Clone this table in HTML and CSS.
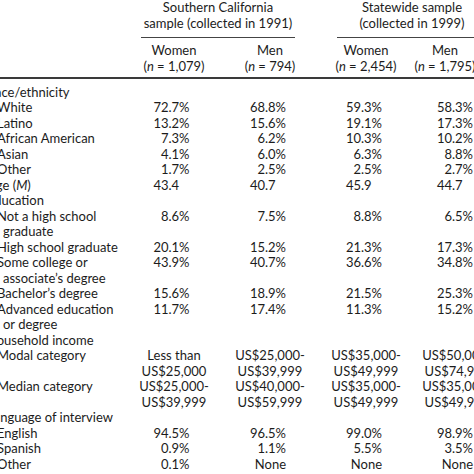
FILE: index.html
```html
<!DOCTYPE html>
<html>
<head>
<meta charset="utf-8">
<link rel="stylesheet" href="styles.css">
</head>
<body>
<div class="page">
  <div class="table">
    <div></div>
    <div class="group g1">Southern California<br>sample (collected in 1991)</div>
    <div class="group g2">Statewide sample<br>(collected in 1999)</div>

    <div class="hcell"></div>
    <div class="hcell hdr">Women<br>(<i>n</i> = 1,079)</div>
    <div class="hcell hdr">Men<br>(<i>n</i> = 794)</div>
    <div class="hcell hdr">Women<br>(<i>n</i> = 2,454)</div>
    <div class="hcell hdr h4">Men<br>(<i>n</i> = 1,795)</div>

    <div class="rule"></div>

    <div class="top">Race/ethnicity</div><div></div><div></div><div></div><div></div>
    <div class="sub">White</div><div class="num c1">72.7%</div><div class="num c2">68.8%</div><div class="num c3">59.3%</div><div class="num c4">58.3%</div>
    <div class="sub">Latino</div><div class="num c1">13.2%</div><div class="num c2">15.6%</div><div class="num c3">19.1%</div><div class="num c4">17.3%</div>
    <div class="sub">African American</div><div class="num c1">7.3%</div><div class="num c2">6.2%</div><div class="num c3">10.3%</div><div class="num c4">10.2%</div>
    <div class="sub">Asian</div><div class="num c1">4.1%</div><div class="num c2">6.0%</div><div class="num c3">6.3%</div><div class="num c4">8.8%</div>
    <div class="sub">Other</div><div class="num c1">1.7%</div><div class="num c2">2.5%</div><div class="num c3">2.5%</div><div class="num c4">2.7%</div>
    <div class="top">Age (<i>M</i>)</div><div class="num c1">43.4<span class="ph">%</span></div><div class="num c2">40.7<span class="ph">%</span></div><div class="num c3">45.9<span class="ph">%</span></div><div class="num c4">44.7<span class="ph">%</span></div>
    <div class="top">Education</div><div></div><div></div><div></div><div></div>
    <div class="sub">Not a high school<br>graduate</div><div class="num c1">8.6%</div><div class="num c2">7.5%</div><div class="num c3">8.8%</div><div class="num c4">6.5%</div>
    <div class="sub">High school graduate</div><div class="num c1">20.1%</div><div class="num c2">15.2%</div><div class="num c3">21.3%</div><div class="num c4">17.3%</div>
    <div class="sub">Some college or<br>associate’s degree</div><div class="num c1">43.9%</div><div class="num c2">40.7%</div><div class="num c3">36.6%</div><div class="num c4">34.8%</div>
    <div class="sub">Bachelor’s degree</div><div class="num c1">15.6%</div><div class="num c2">18.9%</div><div class="num c3">21.5%</div><div class="num c4">25.3%</div>
    <div class="sub">Advanced education<br>or degree</div><div class="num c1">11.7%</div><div class="num c2">17.4%</div><div class="num c3">11.3%</div><div class="num c4">15.2%</div>
    <div class="top">Household income</div><div></div><div></div><div></div><div></div>
    <div class="sub">Modal category</div><div class="ctr">Less than<br>US$25,000</div><div class="ctr">US$25,000-<br>US$39,999</div><div class="ctr">US$35,000-<br>US$49,999</div><div class="ctr">US$50,000-<br>US$74,999</div>
    <div class="sub">Median category</div><div class="ctr">US$25,000-<br>US$39,999</div><div class="ctr">US$40,000-<br>US$59,999</div><div class="ctr">US$35,000-<br>US$49,999</div><div class="ctr">US$35,000-<br>US$49,999</div>
    <div class="top">Language of interview</div><div></div><div></div><div></div><div></div>
    <div class="sub">English</div><div class="num c1">94.5%</div><div class="num c2">96.5%</div><div class="num c3">99.0%</div><div class="num c4">98.9%</div>
    <div class="sub">Spanish</div><div class="num c1">0.9%</div><div class="num c2">1.1%</div><div class="num c3">5.5%</div><div class="num c4">3.5%</div>
    <div class="sub">Other</div><div class="num c1">0.1%</div><div class="num c2">None</div><div class="num c3">None</div><div class="num c4">None</div>
  </div>
</div>
</body>
</html>
```

FILE: styles.css
```css
html, body {
  margin: 0;
  padding: 0;
  background: #fff;
  overflow: hidden;
}
.page {
  width: 474px;
  height: 474px;
  overflow: hidden;
  font-family: "Lato", "Liberation Sans", sans-serif;
  font-size: 13px;
  line-height: 15.5px;
  color: #1c1c1c;
}
.table {
  display: grid;
  grid-template-columns: 139px 96px 96px 96px 86px;
  width: 513px;
  margin-left: -13px;
}
.group {
  text-align: center;
  padding-bottom: 6px;
  border-bottom: 1px solid #444;
}
.g1 {
  grid-column: 2 / 4;
  margin: 0 23px 0 15px;
}
.g2 {
  grid-column: 4 / 6;
  margin: 0 13px 0 19px;
}
.hcell {
  margin-top: 5px;
}
.hdr {
  text-align: center;
}
.h4 {
  padding-right: 24px;
}
.rule {
  grid-column: 1 / -1;
  height: 2px;
  background: #3a3a3a;
  margin: 3px 0 5.5px;
}
.top {
  white-space: nowrap;
}
.sub {
  white-space: nowrap;
  padding-left: 16px;
  text-indent: -6px;
}
.num {
  text-align: right;
  white-space: nowrap;
}
.c1 { padding-right: 32.5px; }
.c2 { padding-right: 32px; }
.c3 { padding-right: 32px; }
.c4 { padding-right: 27px; }
.ph {
  visibility: hidden;
}
.ctr {
  text-align: center;
  white-space: nowrap;
}
```
